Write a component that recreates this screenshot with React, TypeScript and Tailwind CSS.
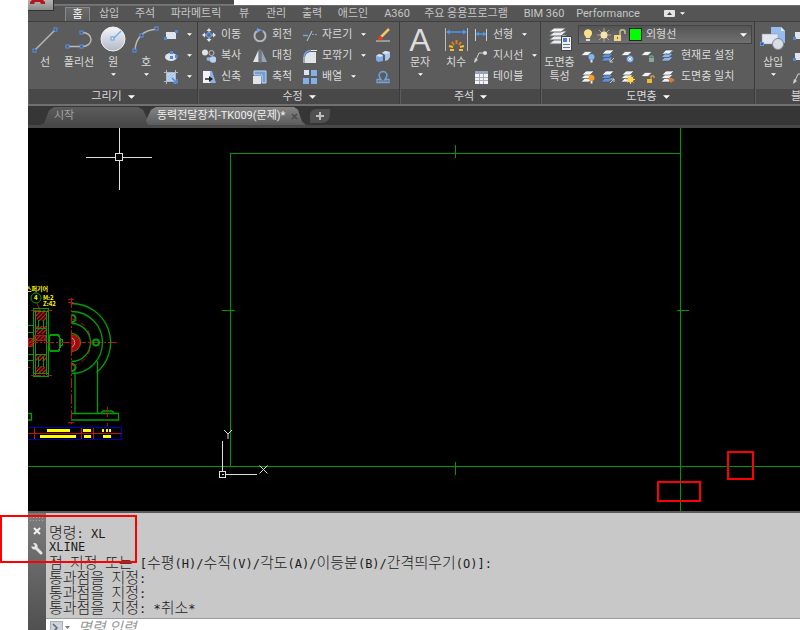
import type { ReactNode } from "react"

const menuTabs = [
  { label: "삽입", width: "w-[38px]" },
  { label: "주석", width: "w-[34px]" },
  { label: "파라메트릭", width: "w-[68px]" },
  { label: "뷰", width: "w-[28px]" },
  { label: "관리", width: "w-[36px]" },
  { label: "출력", width: "w-[36px]" },
  { label: "애드인", width: "w-[46px]" },
  { label: "A360", width: "w-[42px]" },
  { label: "주요 응용프로그램", width: "w-[96px]" },
  { label: "BIM 360", width: "w-[60px]" },
  { label: "Performance", width: "w-[68px]" },
]

const history = [
  "명령: XL",
  "XLINE",
  "점 지정 또는 [수평(H)/수직(V)/각도(A)/이등분(B)/간격띄우기(O)]:",
  "통과점을 지정:",
  "통과점을 지정:",
  "통과점을 지정: *취소*",
]

const blue = "#6fa3e8"
const light = "#dfe3ec"

const Arrow = ({ big = false }: { big?: boolean }) => (
  <svg width={big ? 7 : 5} height={big ? 4 : 3} viewBox="0 0 6 3" className="shrink-0 fill-white">
    <path d="M0 0h6L3 3z" />
  </svg>
)

type IconProps = { size?: number; children: ReactNode }

const Icon = ({ size = 14, children }: IconProps) => (
  <svg width={size} height={size} viewBox={`0 0 ${size} ${size}`} fill="none" className="shrink-0">
    {children}
  </svg>
)

const Node = ({ x, y }: { x: number; y: number }) => (
  <rect x={x - 1.5} y={y - 1.5} width="3" height="3" fill="#43536b" stroke="#5b94e6" />
)

const LineIcon = () => (
  <Icon size={28}>
    <path d="M4 24 24 4" stroke="#b9b9b9" strokeWidth="1.5" />
    <Node x={3.5} y={24.5} />
    <Node x={24.5} y={3.5} />
  </Icon>
)

const PolylineIcon = () => (
  <Icon size={28}>
    <path d="M3 20.5h14c12 0 12-14 0-14" stroke="#b9b9b9" strokeWidth="1.5" />
    <Node x={2.5} y={20.5} />
    <Node x={16.5} y={20.5} />
    <Node x={16.5} y={6.5} />
  </Icon>
)

const CircleIcon = () => (
  <Icon size={28}>
    <defs>
      <linearGradient id="disc" x1="0" y1="0" x2="0" y2="1">
        <stop offset="0" stopColor="#f4f5f9" />
        <stop offset="1" stopColor="#b4b8c7" />
      </linearGradient>
    </defs>
    <circle cx="14" cy="13" r="12" fill="url(#disc)" stroke="#eef0f4" />
    <path d="m14 13 8-8" stroke="#6eb0f2" strokeWidth="1.5" />
    <rect x="12" y="11" width="3" height="3" fill="#e8eef8" stroke="#5b9fec" />
  </Icon>
)

const ArcIcon = () => (
  <Icon size={28}>
    <path d="M3 24C4 12 11 4 25 3" stroke="#b9b9b9" strokeWidth="1.5" />
    <Node x={2.5} y={24.5} />
    <Node x={9.5} y={9.5} />
    <Node x={24.5} y={2.5} />
  </Icon>
)

const RectIcon = () => (
  <Icon>
    <rect x="2" y="4" width="10" height="7" fill={light} />
    <rect x="0" y="9" width="3" height="3" fill="#4c8ae0" />
    <rect x="11" y="2" width="3" height="3" fill="#4c8ae0" />
  </Icon>
)

const EllipseIcon = () => (
  <Icon>
    <ellipse cx="7" cy="8" rx="6" ry="4" fill={light} />
    <rect x="6" y="2" width="3" height="3" fill="#4c8ae0" />
    <rect x="11" y="6" width="3" height="3" fill="#4c8ae0" />
    <rect x="6" y="7" width="3" height="3" fill="#4c8ae0" />
  </Icon>
)

const HatchIcon = () => (
  <Icon>
    <rect x="3" y="3" width="8" height="8" fill="#b9d1f5" />
    <path d="M0 2.500h14M0 11.500h14M2.500 0v14M11.500 0v14" stroke="#b3b8c2" />
    <path d="m4 7 3-3M4 10l6-6M7 10l3-3" stroke="#8fb5ea" strokeWidth=".7" />
    <path d="m8 8 5 5M9 13h4V9" stroke="#4c8ae0" strokeWidth="1.500" />
  </Icon>
)

const MoveIcon = () => (
  <Icon>
    <path d="M7 0 4.500 3h5zM7 14l-2.500-3h5zM0 7l3-2.500v5zM14 7l-3-2.500v5z" fill={light} />
    <path d="M7 2v10M2 7h10" stroke={light} />
    <circle cx="7" cy="7" r="2.500" fill="#4b6f9f" stroke={blue} />
  </Icon>
)

const RotateIcon = () => (
  <Icon>
    <path d="M10 3.200A5.500 5.500 0 1 1 4 3.200" stroke="#b3b7be" strokeWidth="2" />
    <path d="M4 3.200C6 1.500 9 1.800 10 3.200" stroke={blue} />
    <path d="M4 0v5l4-3z" fill={blue} />
  </Icon>
)

const TrimIcon = () => (
  <Icon>
    <path d="M0 7.500h5" stroke="#6fa3e8" strokeWidth="1.500" />
    <path d="M4 13 9 3" stroke="#c7c9ce" />
    <path d="M9 6.500h5" stroke={blue} strokeDasharray="2 1" />
  </Icon>
)

const CopyIcon = () => (
  <Icon>
    <circle cx="3" cy="3.500" r="3" fill={light} />
    <circle cx="9.500" cy="4" r="2.500" stroke="#b9bdc8" />
    <circle cx="6.500" cy="10" r="2" fill="#8fb0e0" />
    <circle cx="11" cy="10.500" r="3.300" fill="#bcd1f2" />
  </Icon>
)

const MirrorIcon = () => (
  <Icon>
    <path d="M5.500 1v12H0z" fill={light} />
    <path d="M8.500 1v12H14z" fill="#93a5bd" />
    <path d="M7 0v14" stroke="#87919f" />
  </Icon>
)

const FilletIcon = () => (
  <Icon>
    <path d="M2 14V9c0-4 3-6 6-6h5v11z" fill={light} />
    <path d="M1 8C1.500 4 4 1.500 8 1.500" stroke={blue} strokeWidth="1.500" />
    <path d="M8 1.500h6M1 14V8" stroke="#eceef3" />
  </Icon>
)

const StretchIcon = () => (
  <Icon>
    <path d="M1 1h7v12H1z" fill="#f1f3f8" />
    <path d="M8 1h2l4 12H8z" fill="#8db3e6" />
    <path d="M3 9h6" stroke="#222" strokeWidth="1.500" />
    <path d="m7 6 4 3-4 3z" fill="#222" />
  </Icon>
)

const ScaleIcon = () => (
  <Icon>
    <path d="M1 1h12v12H9V5H1z" fill="#6f9ed8" stroke="#c6daf6" />
    <rect x="0" y="6" width="8" height="8" fill={light} />
  </Icon>
)

const ArrayIcon = () => (
  <Icon>
    <rect x="1" y="0" width="5" height="5" fill={light} />
    <rect x="8" y="0" width="6" height="6" fill="#84b0ea" />
    <rect x="0" y="8" width="6" height="6" fill="#84b0ea" />
    <rect x="8" y="8" width="6" height="6" fill="#84b0ea" />
  </Icon>
)

const BrushIcon = () => (
  <Icon>
    <path d="M0 13h14" stroke="#d7d7d7" />
    <path d="m5 9 8-8" stroke="#f4c66b" strokeWidth="2.500" />
    <path d="M2 12c0-3 2-4 3-4l2 2c0 1-2 3-5 2z" fill="#e0431b" />
  </Icon>
)

const ExplodeIcon = () => (
  <Icon>
    <path d="m0 7 3-2 4 1v6l-5 1-2-2z" fill="#7fabe6" />
    <path d="m6 4 3-2 5 1v5l-2 3-3 1V6z" fill="#a9c7ef" />
    <path d="m0 7 3-2 4 1-2 2zM6 4l3-2 5 1-3 2z" fill={light} />
  </Icon>
)

const OffsetIcon = () => (
  <Icon>
    <path d="M1 12.500V9.500h4C1 5 4 1.500 7 1.500s6 3.500 2 8h4v3z" stroke={blue} strokeWidth="1.300" />
    <path d="M3 11h8" stroke="#a9acb3" strokeWidth=".7" />
  </Icon>
)

const DimensionIcon = () => (
  <Icon size={28}>
    <path d="M3.500 2v23M25.500 2v23" stroke="#bdbdbd" />
    <path d="M5 6h19" stroke="#4d95ee" strokeWidth="1.500" />
    <path d="M4 6l4-2.500v5zM25 6l-4-2.500v5z" fill="#4d95ee" />
    <path d="M14.500 14v4M10 16l2 3M19 16l-2 3" stroke="#e9791c" strokeWidth="2" />
    <path d="M7 20l4 1M22 20l-4 1M8 24h4M17 24h4" stroke="#f7bd2d" strokeWidth="2" />
  </Icon>
)

const LinearIcon = () => (
  <Icon>
    <path d="M1.500 1v12M12.500 1v12" stroke="#cfcfcf" />
    <path d="M2 6h10" stroke="#4d95ee" strokeWidth="1.500" />
    <path d="M2 6l3-2.500v5zM12 6 9 3.500v5z" fill="#4d95ee" />
  </Icon>
)

const LeaderIcon = () => (
  <Icon>
    <path d="M1 13 5 4h5" stroke="#cfcfcf" />
    <path d="m0 14 1-5 3 2z" fill="#cfcfcf" />
    <circle cx="11" cy="4" r="2" fill="#e3e3e3" />
  </Icon>
)

const TableIcon = () => (
  <Icon>
    <rect x="1" y="1" width="13" height="13" fill="#f3f4f7" />
    <rect x="1" y="1" width="13" height="3" fill="#9aa3b6" />
    <path d="M1 7.500h13M1 10.500h13M5.500 4v10M9.500 4v10" stroke="#a9aebb" />
  </Icon>
)

const LayerPropsIcon = () => (
  <Icon size={28}>
    <path d="M3 18h12l5-5H9z" fill="#eceef2" stroke="#666" />
    <path d="M3 14h12l6-5H9z" fill="#eceef2" stroke="#666" />
    <path d="M3 10h12l6-5H9z" fill="#eceef2" stroke="#666" />
    <path d="M3 6h12l5-4H8z" fill="#f7f8fa" stroke="#666" />
    <rect x="15.500" y="10.500" width="10" height="14" fill="#eef0f5" stroke="#444" />
    <rect x="17" y="12" width="4" height="4" fill="#4d7fc9" />
    <path d="M23.500 12v4M17 18.500h7M17 21.500h7" stroke="#6c7688" />
  </Icon>
)

// Stack of sheets with a coloured badge in the corner.
const LayerIcon = ({ fill, single = false, children }: { fill: string; single?: boolean; children: ReactNode }) => (
  <Icon>
    {!single && (
      <>
        <path d="M0 12h8l4-4H4z" fill={fill} stroke="#4a4a4a" strokeWidth=".6" />
        <path d="M0 8.500h8l4-4H4z" fill={fill} stroke="#4a4a4a" strokeWidth=".6" />
      </>
    )}
    <path d={single ? "M0 6.500h7l4-4H4z" : "M1 5h8l4-4H5z"} fill="#f1f3f6" stroke="#4a4a4a" strokeWidth=".6" />
    {children}
  </Icon>
)

const Bulb = ({ color }: { color: string }) => (
  <>
    <circle cx="10.500" cy="8" r="3" fill={color} />
    <path d="M9.500 11h2v2.500h-2z" fill="#e8e8e8" />
  </>
)

const layerRow1 = [
  <LayerIcon key="off" fill="#fff" single><Bulb color="#7fb7f5" /></LayerIcon>,
  <LayerIcon key="iso" fill="#5e93dc"><path d="m13 9-4 4m0-3v3h3" stroke="#c9c9c9" /></LayerIcon>,
  <LayerIcon key="frz" fill="#fff" single>
    <circle cx="9" cy="10" r="3.500" fill="#5f97e0" />
    <path d="M9 7v6M6 10h6M7 8l4 4M11 8l-4 4" stroke="#fff" strokeWidth=".7" />
  </LayerIcon>,
  <LayerIcon key="lck" fill="#fff" single>
    <rect x="8" y="9" width="5" height="4" fill="#8da39b" />
    <path d="M9 9V7h3v2" stroke="#6fc0a8" />
  </LayerIcon>,
  <LayerIcon key="cur" fill="#8fb5ea"><path d="m5 4 2 2 5-5" stroke="#5590dd" /></LayerIcon>,
]

const layerRow2 = [
  <LayerIcon key="on" fill="#eef0f4"><Bulb color="#ff9d1f" /></LayerIcon>,
  <LayerIcon key="uniso" fill="#5e93dc"><path d="m9 13 4-4m-3 0h3v3" stroke="#c9c9c9" /></LayerIcon>,
  <LayerIcon key="thaw" fill="#eef0f4">
    <circle cx="9.500" cy="9.500" r="3" fill="#ffd84a" />
    <path d="M9.500 5v9M5 9.500h9M6.500 6.500l6 6M12.500 6.500l-6 6" stroke="#ffd84a" />
  </LayerIcon>,
  <LayerIcon key="unl" fill="#fff" single>
    <rect x="6" y="9" width="5" height="4" fill="#f5b92e" />
    <path d="M10 9V6h3v2" stroke="#f5b92e" />
  </LayerIcon>,
  <LayerIcon key="match" fill="#eef0f4"><path d="m7 9 3 4 4-3-3-2z" fill="#d9782d" /></LayerIcon>,
]

const InsertIcon = () => (
  <Icon size={28}>
    <path d="M12 1h10l4 4v12H12z" fill="#94bdee" />
    <path d="M22 1v4h4z" fill="#dbe9fb" />
    <rect x="3" y="8" width="16" height="10" fill="#e3e6ee" stroke="#8c93a3" strokeWidth=".5" />
    <circle cx="19" cy="18" r="5.500" fill="#d8dce5" stroke="#80889a" />
    <Node x={3} y={18} />
  </Icon>
)

type BigProps = { icon: ReactNode; label: ReactNode; arrow?: boolean; width: string }

const BigButton = ({ icon, label, arrow, width }: BigProps) => (
  <button type="button" className={`flex shrink-0 flex-col items-center ${width}`}>
    <span className="flex h-8 items-center">{icon}</span>
    <span className="leading-[14px] whitespace-nowrap">{label}</span>
    {arrow && <span className="mt-[3px]"><Arrow /></span>}
  </button>
)

type SmallProps = { icon: ReactNode; label?: string; arrow?: boolean }

const SmallButton = ({ icon, label, arrow }: SmallProps) => (
  <button type="button" className="flex h-[21px] items-center gap-[5px] whitespace-nowrap">
    {icon}
    {label}
    {arrow && <span className="ml-1"><Arrow /></span>}
  </button>
)

const Panel = ({ title, width, children }: { title: string; width: string; children: ReactNode }) => (
  <section className={`flex flex-col overflow-hidden border-r border-[#3c3c3c] ${width}`}>
    <div className="flex h-[67px] pt-[2px]">{children}</div>
    <button
      type="button"
      className="flex h-[15px] items-center justify-center gap-[6px] border-l border-[#5c5c5c] bg-[#484848] whitespace-nowrap"
    >
      {title}
      <Arrow big />
    </button>
  </section>
)

const Ribbon = () => (
  <div className="flex h-[83px] overflow-hidden border-t border-[#404040] bg-[#5c5c5c]">
    <Panel title="그리기" width="w-[170px] shrink-0">
      <BigButton width="w-[34px]" icon={<LineIcon />} label="선" />
      <BigButton width="w-[34px]" icon={<PolylineIcon />} label="폴리선" />
      <BigButton width="w-[34px]" icon={<CircleIcon />} label="원" arrow />
      <BigButton width="w-[32px]" icon={<ArcIcon />} label="호" arrow />
      <div className="ml-[2px]">
        <SmallButton icon={<RectIcon />} arrow />
        <SmallButton icon={<EllipseIcon />} arrow />
        <SmallButton icon={<HatchIcon />} arrow />
      </div>
    </Panel>
    <Panel title="수정" width="w-[202px] shrink-0">
      <div className="ml-1 w-[51px]">
        <SmallButton icon={<MoveIcon />} label="이동" />
        <SmallButton icon={<CopyIcon />} label="복사" />
        <SmallButton icon={<StretchIcon />} label="신축" />
      </div>
      <div className="w-[50px]">
        <SmallButton icon={<RotateIcon />} label="회전" />
        <SmallButton icon={<MirrorIcon />} label="대칭" />
        <SmallButton icon={<ScaleIcon />} label="축척" />
      </div>
      <div className="w-[73px]">
        <SmallButton icon={<TrimIcon />} label="자르기" arrow />
        <SmallButton icon={<FilletIcon />} label="모깎기" arrow />
        <SmallButton icon={<ArrayIcon />} label="배열" arrow />
      </div>
      <div>
        <SmallButton icon={<BrushIcon />} />
        <SmallButton icon={<ExplodeIcon />} />
        <SmallButton icon={<OffsetIcon />} />
      </div>
    </Panel>
    <Panel title="주석" width="w-[141px] shrink-0">
      <BigButton
        width="ml-[2px] w-[36px]"
        icon={<span className="font-['Liberation_Sans',sans-serif] text-[32px] leading-8 text-[#dcdcdc]">A</span>}
        label="문자"
        arrow
      />
      <BigButton width="w-[36px]" icon={<DimensionIcon />} label="치수" />
      <div>
        <SmallButton icon={<LinearIcon />} label="선형" arrow />
        <SmallButton icon={<LeaderIcon />} label="지시선" arrow />
        <SmallButton icon={<TableIcon />} label="테이블" />
      </div>
    </Panel>
    <Panel title="도면층" width="w-[214px] shrink-0">
      <BigButton width="w-[37px]" icon={<LayerPropsIcon />} label={<>도면층<br />특성</>} />
      <div className="min-w-0 flex-1 pr-[2px]">
        <div className="mt-px flex h-[19px] items-center gap-[2px] border border-[#444] bg-gradient-to-b from-[#555] to-[#707070] pr-1 pl-[2px]">
          <Icon>
            <path d="M3 5c0-5 8-5 8 0 0 3-2 3-2 5H5c0-2-2-2-2-5z" fill="#fbe08a" />
            <path d="M5 11h4v2H5z" fill="#ddd" />
          </Icon>
          <Icon>
            <path d="M7 0v14M0 7h14M2 2l10 10M12 2 2 12" stroke="#b5a77f" />
            <circle cx="7" cy="7" r="3.500" fill="#f6e4b0" />
          </Icon>
          <Icon>
            <rect x="1" y="7" width="7" height="6" fill="#f1d488" />
            <path d="M7 7V4c0-3 5-3 5 0v2" stroke="#c9bd98" strokeWidth="1.500" />
            <path d="M4.500 9v2" stroke="#7d6526" />
          </Icon>
          <span className="h-[13px] w-[13px] shrink-0 border border-[#222] bg-[#00ff00]" />
          <select
            aria-label="도면층"
            className="ml-[2px] h-4 min-w-0 flex-1 appearance-none bg-transparent text-[11px] leading-4 outline-none"
          >
            <option>외형선</option>
          </select>
          <Arrow big />
        </div>
        <div className="mt-px flex h-[21px] items-center gap-[6px] pl-[3px]">
          {layerRow1.map((icon) => <button type="button" key={icon.key}>{icon}</button>)}
          <button type="button" className="whitespace-nowrap">현재로 설정</button>
        </div>
        <div className="flex h-[21px] items-center gap-[6px] pl-[3px]">
          {layerRow2.map((icon) => <button type="button" key={icon.key}>{icon}</button>)}
          <button type="button" className="whitespace-nowrap">도면층 일치</button>
        </div>
      </div>
    </Panel>
    <Panel title="블록" width="min-w-[105px] flex-1">
      <BigButton width="w-[36px]" icon={<InsertIcon />} label="삽입" arrow />
      <div className="ml-[2px]">
        <SmallButton icon={<RectIcon />} />
        <SmallButton icon={<RectIcon />} />
        <SmallButton icon={<LeaderIcon />} />
      </div>
    </Panel>
  </div>
)

const DocumentTabs = () => (
  <div className="flex h-6 items-end border-t-2 border-b-3 border-t-[#707070] border-b-[#484848] bg-[#363636] pl-3">
    <button
      type="button"
      className="h-[18px] w-[110px] bg-gradient-to-b from-[#5c5c5c] to-[#484848] pl-[14px] text-left text-[#a3a3a3] [clip-path:polygon(0_100%,4px_90%,9px_20%,14px_0,98px_0,103px_15%,110px_100%)]"
    >
      시작
    </button>
    <div className="-ml-1 flex h-[18px] w-[160px] items-center gap-[6px] bg-gradient-to-b from-[#858585] to-[#5c5c5c] pl-[11px] [clip-path:polygon(0_75%,5px_15%,10px_0,148px_0,152px_15%,156px_80%,160px_100%,2px_100%)]">
      <button type="button" className="whitespace-nowrap text-[#efefef]">동력전달장치-TK009(문제)*</button>
      <button type="button" aria-label="닫기">
        <svg width="7" height="7" viewBox="0 0 7 7" stroke="#4a4a4a" strokeWidth="1.500">
          <path d="m1 1 5 5M6 1 1 6" />
        </svg>
      </button>
    </div>
    <button
      type="button"
      aria-label="새 도면"
      className="ml-1 flex h-[14px] w-5 items-center justify-center self-center rounded-tl-md rounded-br-lg bg-[#505050]"
    >
      <svg width="8" height="8" viewBox="0 0 8 8" stroke="#bdbdbd" strokeWidth="2">
        <path d="M4 0v8M0 4h8" />
      </svg>
    </button>
  </div>
)

// Drawing content in model space; the canvas clips whatever runs off its edges.
const Drawing = () => (
  <svg className="block h-full w-full" fill="none" shapeRendering="crispEdges">
    <defs>
      <pattern id="hatch" width="4" height="4" patternUnits="userSpaceOnUse">
        <path d="M-1 5 5-1M-1 1 1-1M3 5 5 3" stroke="#d01414" shapeRendering="auto" strokeWidth="1.500" />
      </pattern>
    </defs>
    <g transform="translate(-28 -128)">
      <g stroke="#009a00">
        <path d="M680.500 128v2000M28 466.500h3000M230.500 153v313M230 153.500h450" />
        <path d="M455.500 145v13M455.500 462v13M222 310.500h13M677 310.500h12" />
      </g>

      <g stroke="#dedede">
        <path d="M119.500 128v25M119.500 161v29M86 157.500h29M123 157.500h29" />
        <rect x="115.500" y="153.500" width="7" height="7" />
        <path d="M222.500 441v31M226 474.500h31" />
        <rect x="219.500" y="471.500" width="6" height="6" />
        <path d="M222 474.500h2" />
        <path d="m224 430 4 4 4-4M228 434v5M259.500 465.500l8 8M267.500 465.500l-8 8" shapeRendering="auto" />
      </g>

      {/* gear section */}
      <g shapeRendering="auto">
        <circle cx="36" cy="298" r="5" stroke="#00a000" />
        <path d="m37 303 3 7" stroke="#d01010" />
        <path d="M35 312h12v6l-3 3h-5l-4-3zM35 326h12v8H35zM35 354h12v7H35zM38 366h6l3 4v4H35v-4z" fill="url(#hatch)" />
      </g>
      <g stroke="#00a000">
        <path d="M33.500 308.500h15v68h-15zM35.500 311v64M46.500 311v64M33 311.500h16M33 373.500h16M38.500 320v8M43.500 320v8M38.500 357v10M43.500 357v10M35 328.500h12M35 354.500h12" />
        <path d="M28 332.500h5M28 354.500h5M28 325.500h5M28 360.500h5M49 335.500h10v15H49zM50 334.500h8l2 4v9l-2 4h-8M60 339.500h2v6h-2M28 338.500h6M28 346.500h6" />
      </g>
      <path d="M34 335h11v5H34zM28 338h4v8h-4z" fill="url(#hatch)" stroke="#c01010" />
      <path d="M28 342.500h89M31 310.500h21M31 375.500h21M28 367.500h2" stroke="#c01010" strokeDasharray="10 2 2 2" />

      {/* bearing housing */}
      <g stroke="#00a000" shapeRendering="auto" strokeWidth="1.300">
        <path d="M71.500 303.500a39 39 0 0 1 25 69M71.500 311.500a31 31 0 0 1 0 62M71.500 323.500a19 19 0 0 1 0 38M71.500 333.500a9 9 0 0 1 0 18" />
        <path d="M72 315a3.500 3.500 0 1 1 0 7M72 364a3.500 3.500 0 1 1 0 7" strokeWidth="2" />
        <circle cx="96" cy="342.500" r="3" strokeWidth="2" />
        <path d="M75 374v39M97.500 361v52M71 413.500h47.500v6.500H71M101 413l2-2h9l2 2M28 413.500h3.500v6.500H28" />
      </g>
      <path d="M72 335a8 8 0 0 1 0 16z" fill="#a00c0c" stroke="#d01515" shapeRendering="auto" />
      <path d="M72 338a5 5 0 0 1 0 9" stroke="#d8c0b0" strokeWidth=".7" shapeRendering="auto" />
      <path d="M72 319a24 24 0 0 1 0 47" stroke="#c01010" strokeDasharray="5 2 1 2" shapeRendering="auto" />
      <path d="M71.500 298v126M107.500 407v19" stroke="#c01010" strokeDasharray="10 2 2 2" />
      <path d="M68 299.500h6M68 302.500h6M68 422.500h6" stroke="#c01010" />

      {/* parts list */}
      <path d="M28 427.500h93.500v12H28" stroke="#0000c0" />
      <path d="M28 433.500h93M34.500 428v11M81.500 428v11M93.500 428v11" stroke="#c01010" />
      <path
        d="M47 429h23v3H47zM83 429h8v3h-8zM102 429h2v3h-2zM106 429h2v3h-2zM109 429h2v3h-2zM40 435h36v3H40zM84 435h7v3h-7zM103 435h8v3h-8z"
        fill="#ffff00"
      />
      <g className="fill-[#ffff00] font-['Noto_Sans_CJK_KR',sans-serif] font-bold">
        <text x="26" y="291" fontSize="6">스퍼기어</text>
        <text x="34" y="300" fontSize="6">4</text>
        <text x="43" y="300" fontSize="6">M:2</text>
        <text x="43" y="306" fontSize="6">Z:42</text>
      </g>

      <g stroke="#ff0000" strokeWidth="2">
        <rect x="728" y="452" width="25" height="27" />
        <rect x="658" y="482" width="42" height="19" />
      </g>
    </g>
  </svg>
)

// Hangul takes two cells of the console grid and everything else one.
const ConsoleLine = ({ text }: { text: string }) => (
  <p className="h-[15px] leading-[15px] whitespace-pre">
    {text.split(/([가-힣]+)/).map((run, i) => (
      <span
        key={i}
        className={i % 2 ? "text-[15px] font-light" : "font-['DejaVu_Sans_Mono',monospace] text-[12px]"}
      >
        {run}
      </span>
    ))}
  </p>
)

const CommandWindow = () => (
  <div className="relative flex h-[119px] shrink-0 border-t-2 border-[#5a5a5a] bg-[#c8c8c8] font-['Noto_Sans_CJK_KR',sans-serif] text-[#1c1c1c]">
    <div className="flex w-[18px] shrink-0 flex-col items-center bg-gradient-to-b from-[#7c7c7c] to-[#505050] pr-px">
      <div className="mt-[3px] h-[5px] w-4 bg-[radial-gradient(#aaa_30%,transparent_40%)] bg-[length:3px_3px]" />
      <button type="button" aria-label="닫기" className="mt-[6px]">
        <svg width="8" height="8" viewBox="0 0 8 8" stroke="#f2f2f2" strokeWidth="2">
          <path d="m1 1 6 6M7 1 1 7" />
        </svg>
      </button>
      <button type="button" aria-label="사용자화" className="mt-[7px]">
        <svg width="13" height="13" viewBox="0 0 13 13" fill="none">
          <path d="m6 6 5 5" stroke="#e4e4e4" strokeWidth="3" strokeLinecap="round" />
          <path d="M3 1.500 5 3.500 4 5 1.500 4C1 6 3 8 5 7.500S8.500 4.500 7 2.500 4 1 3 1.500z" fill="#e4e4e4" />
        </svg>
      </button>
    </div>
    <div className="flex min-w-0 flex-1 flex-col justify-end overflow-hidden">
      <div className="pb-1 pl-[3px]">
        {history.map((text, i) => <ConsoleLine key={i} text={text} />)}
      </div>
      <label className="flex h-3 items-start overflow-hidden border-t border-[#9c9c9c] bg-white pl-1">
        <svg width="22" height="13" viewBox="0 0 22 13" fill="none" className="shrink-0">
          <rect x="0.500" y="2.500" width="12" height="12" fill="#cfd4dc" stroke="#a9adb5" />
          <path d="m3 5 4 4-4 4" stroke="#5f6670" strokeWidth="1.500" />
          <path d="M15 7h5l-2.500 3z" fill="#777" />
        </svg>
        <input
          type="text"
          aria-label="명령 입력"
          placeholder="명령 입력"
          className="ml-[6px] h-4 min-w-0 flex-1 text-[15px] leading-4 italic outline-none placeholder:text-[#999]"
        />
      </label>
    </div>
    <div className="pointer-events-none absolute top-[2px] -left-7 h-[48px] w-[137px] border-2 border-[#ff0000]" />
  </div>
)

export default function App() {
  return (
    <div className="flex h-screen min-h-[500px] flex-col bg-white pl-7 font-['Roboto','Noto_Sans_CJK_KR',sans-serif] text-[11px] leading-[14px] text-[#dadada]">
      <header className="relative shrink-0">
        <div className="h-[5px] w-[206px] border-b border-[#777] bg-[#4a4a4a]" />
        <nav className="flex h-4 overflow-hidden border-t border-[#6e6e6e] bg-[#555] pl-[37px] text-[#c6c6c6]">
          <button
            type="button"
            className="mt-px w-[25px] shrink-0 border border-b-0 border-[#888] bg-gradient-to-b from-[#6b6b6b] to-[#5c5c5c] leading-3 text-white"
          >
            홈
          </button>
          {menuTabs.map(({ label, width }) => (
            <button type="button" key={label} className={`shrink-0 whitespace-nowrap ${width}`}>
              {label}
            </button>
          ))}
          <button type="button" aria-label="리본 최소화" className="ml-[22px] flex items-center gap-[5px]">
            <svg width="11" height="7" viewBox="0 0 11 7">
              <rect width="11" height="7" rx="1" fill="#e4e4e4" />
              <path d="M3 5h5L5.500 2z" fill="#444" />
            </svg>
            <Arrow />
          </button>
        </nav>
        <button
          type="button"
          aria-label="응용프로그램 메뉴"
          className="absolute top-0 left-0 h-[11px] w-[26px] border-r border-b border-[#333] bg-gradient-to-b from-[#b5b5b5] to-[#8b8b8b]"
        >
          <svg width="18" height="6" viewBox="0 0 18 6" className="absolute top-0 left-[1px]">
            <path d="M3 0h11l2 2v2h-4l-1-2H6L5 4H1V2z" fill="#b3161b" />
          </svg>
        </button>
        <Ribbon />
        <DocumentTabs />
      </header>
      <main className="min-h-0 flex-1 overflow-hidden bg-black">
        <Drawing />
      </main>
      <CommandWindow />
    </div>
  )
}
